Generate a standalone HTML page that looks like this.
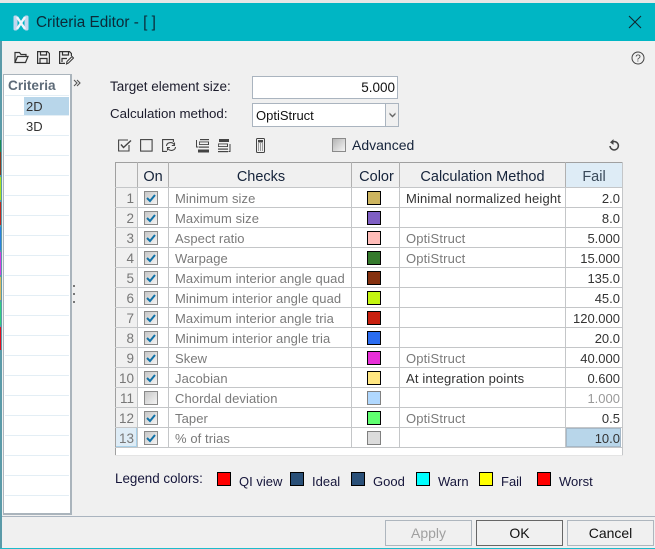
<!DOCTYPE html>
<html><head><meta charset="utf-8"><title>Criteria Editor</title>
<style>
html,body{margin:0;padding:0;background:#f0f0f0}
#w{position:relative;width:655px;height:549px;overflow:hidden;background:#f0f0f0;font:13px/20px "Liberation Sans",sans-serif;color:#1c1c2c}
#w div,#w span,#w svg{position:absolute;white-space:nowrap}
.b{background:#c4c6c8}
.n{left:115px;width:19px;text-align:right;color:#777;font-size:13.5px;margin-top:1px}
.t{left:175px;color:#7a7a7a;letter-spacing:.08px;margin-top:1px}
.m{left:406px;color:#7a7a7a;letter-spacing:.16px;margin-top:1px}
.f{left:566px;width:54px;text-align:right;color:#333;margin-top:1px}
.c{left:144px;width:12px;height:12px;border:1px solid #8a8a8a;background:linear-gradient(135deg,#c8c8c8,#f4f4f4)}
.s{left:367px;width:12px;height:12px;border:1px solid #000}
.h{top:167px;font-size:14.5px;color:#15233a;text-align:center}
.l{width:12px;height:12px;border:1px solid #000;top:472px}
.lt{top:472px;font-size:13px;color:#15153a}
.btn{top:520px;width:85px;height:24px;border:1px solid #aeb6be;text-align:center;line-height:24px;font-size:14px;background:#f0f0f0}
.ln{left:5px;width:64px;height:1px;background:#e3eef5}
</style></head><body><div id="w">
<div style="left:0;top:0;width:655px;height:3px;background:#e6e6e6"></div>
<div style="left:0;top:3px;width:655px;height:38px;background:#00b6c4"></div>
<div style="left:0;top:41px;width:2px;height:507px;background:#5a9aa8"></div>
<div style="left:0;top:140px;width:1px;height:12px;background:#1a8a50"></div>
<div style="left:0;top:152px;width:1px;height:23px;background:#8a3a20"></div>
<div style="left:0;top:177px;width:1px;height:23px;background:#a8e020"></div>
<div style="left:0;top:202px;width:1px;height:23px;background:#c02a20"></div>
<div style="left:0;top:227px;width:1px;height:23px;background:#2a80e0"></div>
<div style="left:0;top:252px;width:1px;height:23px;background:#d040e0"></div>
<div style="left:0;top:277px;width:1px;height:23px;background:#d8b860"></div>
<div style="left:0;top:302px;width:1px;height:23px;background:#30d080"></div>
<div style="left:0;top:327px;width:1px;height:23px;background:#e01020"></div>
<div style="left:2px;top:41px;width:653px;height:507px;background:#f0f0f0"></div>
<div style="left:0;top:548px;width:655px;height:1px;background:#1cbccb"></div>

<svg style="left:12px;top:14px" width="18" height="18" viewBox="0 0 18 18"><rect x="1.5" y="1.5" width="4" height="15" rx="1.5" fill="#c4d6ee"/><rect x="12.5" y="1.5" width="4" height="15" rx="1.5" fill="#c4d6ee"/><path d="M5 3 L9 9 L13 3 M5 15 L9 9 L13 15" fill="none" stroke="#f0f5fc" stroke-width="2.4"/></svg>
<div style="left:36px;top:13px;font-size:15.3px;color:#0c2a38">Criteria Editor - [ ]</div>
<svg style="left:628px;top:15px" width="14" height="14" viewBox="0 0 14 14"><path d="M1 1 L13 13 M13 1 L1 13" stroke="#10282f" stroke-width="1.1" fill="none"/></svg>

<svg style="left:14px;top:51px" width="15" height="13" viewBox="0 0 15 13" fill="none" stroke="#333" stroke-width="1.2"><path d="M1 11.5 V1.5 H5.5 L7 3.5 H12 V5.5"/><path d="M1 11.5 H11.5 L14 5.5 H3.5 L1 11.5 Z"/></svg>
<svg style="left:37px;top:51px" width="13" height="13" viewBox="0 0 13 13" fill="none" stroke="#333" stroke-width="1.2"><path d="M.6 .6 H10.5 L12.4 2.5 V12.4 H.6 Z"/><path d="M3.5 .6 V4 H9.5 V.6"/><path d="M3 12.4 V7.5 H10 V12.4"/></svg>
<svg style="left:59px;top:51px" width="15" height="14" viewBox="0 0 15 14" fill="none" stroke="#333" stroke-width="1.2"><path d="M6 12.4 H.6 V.6 H10.5 L12.4 2.5 V5"/><path d="M3.5 .6 V4 H9.5 V.6"/><path d="M3 11 V7.5 H8"/><path d="M7.5 13 L8 10.5 L13 5.5 L14.5 7 L9.5 12 Z" stroke-width="1"/></svg>
<svg style="left:631px;top:51px" width="14" height="14" viewBox="0 0 14 14"><circle cx="7" cy="7" r="6" fill="none" stroke="#444" stroke-width="1"/><text x="7" y="10.5" font-size="10" text-anchor="middle" fill="#444" font-family="Liberation Sans">?</text></svg>

<!-- left panel -->
<div style="left:3px;top:74px;width:66px;height:438px;border:1px solid #aab4bc;border-width:1px 2px 2px 1px;background:#fff"></div>
<div style="left:8px;top:76px;font-weight:bold;color:#5e6b78;font-size:13.6px">Criteria</div>
<div style="left:24px;top:97px;width:45px;height:18px;background:#b8d6ea"></div>
<div style="left:26px;top:97px;color:#333">2D</div>
<div style="left:26px;top:117px;color:#333">3D</div>
<div class="ln" style="top:95px"></div><div class="ln" style="top:115px"></div><div class="ln" style="top:135px"></div><div class="ln" style="top:155px"></div><div class="ln" style="top:175px"></div><div class="ln" style="top:195px"></div><div class="ln" style="top:215px"></div><div class="ln" style="top:235px"></div><div class="ln" style="top:255px"></div><div class="ln" style="top:275px"></div><div class="ln" style="top:295px"></div><div class="ln" style="top:315px"></div><div class="ln" style="top:335px"></div><div class="ln" style="top:355px"></div><div class="ln" style="top:375px"></div><div class="ln" style="top:395px"></div><div class="ln" style="top:415px"></div><div class="ln" style="top:435px"></div><div class="ln" style="top:455px"></div><div class="ln" style="top:475px"></div><div class="ln" style="top:495px"></div>
<svg style="left:73px;top:79px" width="8" height="8" viewBox="0 0 8 8" fill="none" stroke="#555" stroke-width="1.1"><path d="M1 1 L4 4 L1 7 M4 1 L7 4 L4 7"/></svg>
<div style="left:73px;top:285px;width:2px;height:2px;background:#777"></div>
<div style="left:73px;top:293px;width:2px;height:2px;background:#777"></div>
<div style="left:73px;top:301px;width:2px;height:2px;background:#777"></div>

<!-- form -->
<div style="left:110px;top:77px;font-size:13.5px">Target element size:</div>
<div style="left:110px;top:104px;font-size:13.3px">Calculation method:</div>
<div style="left:252px;top:76px;width:144px;height:21px;border:1px solid #aab4bf;background:#fff;text-align:right;line-height:21px;font-size:13.5px;color:#111"><span style="right:2px;top:0">5.000</span></div>
<div style="left:252px;top:103px;width:145px;height:22px;border:1px solid #aab4bf;background:#fff"></div>
<div style="left:256px;top:106px;font-size:13px;color:#111">OptiStruct</div>
<div style="left:385px;top:104px;width:1px;height:22px;background:#aab4bf"></div>
<div style="left:386px;top:104px;width:12px;height:22px;background:#f0f0f0"></div>
<svg style="left:389px;top:112px" width="7" height="6" viewBox="0 0 7 6"><path d="M.5 .5 L3.5 3.5 L6.5 .5 V2.5 L3.5 5.5 L.5 2.5 Z" fill="#666"/></svg>

<!-- table toolbar -->
<svg style="left:118px;top:139px" width="14" height="13" viewBox="0 0 14 13" fill="none" stroke="#444" stroke-width="1.1"><path d="M11 6 V12 H.6 V1 H10"/><path d="M3 5.5 L5.5 8.5 L13 1.5" stroke-width="1.4"/></svg>
<svg style="left:140px;top:139px" width="13" height="13" viewBox="0 0 13 13" fill="none" stroke="#444" stroke-width="1.1"><rect x=".6" y=".6" width="11.5" height="11.5"/></svg>
<svg style="left:162px;top:139px" width="15" height="14" viewBox="0 0 15 14" fill="none" stroke="#444" stroke-width="1.1"><path d="M5 12.4 H.6 V.6 H11.4 V3"/><path d="M4.5 7 A4 3.6 0 0 1 12 5.5 M13.5 8 A4 3.6 0 0 1 6 9.5"/><path d="M12.5 3.5 V6.5 H9.8 M5.5 11.5 V8.5 H8"/></svg>
<svg style="left:195px;top:139px" width="15" height="14" viewBox="0 0 15 14" fill="#444"><rect x="5" y="0" width="9" height="1.2"/><path d="M4 2.5 H14 V6 H4 Z M4.8 3.4 V5.1 H13 V3.4 Z" fill-rule="evenodd"/><path d="M4 7.5 H14 V8.7 H4 Z"/><rect x="3" y="10.5" width="11" height="3"/><path d="M1.5 1 V8 H3.5" fill="none" stroke="#444"/></svg>
<svg style="left:217px;top:139px" width="15" height="14" viewBox="0 0 15 14" fill="#444"><rect x="2" y="0" width="10" height="3"/><path d="M1 4.5 H11 V8 H1 Z M1.8 5.4 V7.1 H10 V5.4 Z" fill-rule="evenodd"/><rect x="1" y="9.5" width="10" height="1.2"/><rect x="1" y="12" width="10" height="1.2"/><path d="M13 5 V12.5 H11.5" fill="none" stroke="#444"/></svg>
<svg style="left:256px;top:138px" width="9" height="15" viewBox="0 0 9 15"><rect x=".5" y=".5" width="8" height="14" rx="1" fill="none" stroke="#444"/><rect x="2" y="2" width="5" height="2.5" fill="#444"/><path d="M2 6 H3 M4 6 H5 M6 6 H7 M2 8 H3 M4 8 H5 M6 8 H7 M2 10 H3 M4 10 H5 M6 10 H7 M2 12 H3 M4 12 H5 M6 12 H7" stroke="#444"/></svg>
<div style="left:332px;top:138px;width:12px;height:12px;border:1px solid #8a8a8a;background:linear-gradient(135deg,#b4b4b4,#f4f4f4)"></div>
<div style="left:352px;top:135px;font-size:14px;color:#15233a">Advanced</div>
<svg style="left:608px;top:139px" width="12" height="13" viewBox="0 0 12 13" fill="none" stroke="#444" stroke-width="1.5"><path d="M3.5 3.5 A4.2 4.2 0 1 1 2 7"/><path d="M5.5 .5 L2.5 3.3 L5.5 5.5" fill="#444" stroke-width=".6"/></svg>

<!-- table -->
<div style="left:115px;top:162px;width:507px;height:293px;background:#fff;box-shadow:inset 0 0 0 0 #000"></div>
<div style="left:115px;top:162px;width:507px;height:25px;background:#f0f0f0"></div>
<div style="left:566px;top:162px;width:56px;height:25px;background:#deecf6"></div>
<div style="left:115px;top:187px;width:22px;height:260px;background:#f0f0f0"></div>
<div style="left:115px;top:427px;width:22px;height:20px;background:#deecf6;box-shadow:inset 0 0 0 1px #a8d0e8"></div>
<div style="left:566px;top:428px;width:55px;height:19px;background:#b8d6ea;box-shadow:inset 0 0 0 1px #a4b8c8"></div>
<div style="left:115px;top:162px;width:507px;height:1px;background:#a0a0a0"></div>
<div style="left:115px;top:162px;width:1px;height:293px;background:#a0a0a0"></div>
<div class="b" style="left:622px;top:162px;width:1px;height:293px"></div>
<div style="left:137px;top:162px;width:1px;height:25px;background:#b0b0b0"></div>
<div style="left:168px;top:162px;width:1px;height:25px;background:#b0b0b0"></div>
<div style="left:351px;top:162px;width:1px;height:25px;background:#b0b0b0"></div>
<div style="left:399px;top:162px;width:1px;height:25px;background:#b0b0b0"></div>
<div style="left:565px;top:162px;width:1px;height:25px;background:#b0b0b0"></div>
<div class="b" style="left:137px;top:187px;width:1px;height:260px"></div>
<div class="b" style="left:168px;top:187px;width:1px;height:260px"></div>
<div class="b" style="left:351px;top:187px;width:1px;height:260px"></div>
<div class="b" style="left:399px;top:187px;width:1px;height:260px"></div>
<div class="b" style="left:565px;top:187px;width:1px;height:260px"></div>
<div class="b" style="left:115px;top:187px;width:507px;height:1px"></div><div class="b" style="left:115px;top:207px;width:507px;height:1px"></div><div class="b" style="left:115px;top:227px;width:507px;height:1px"></div><div class="b" style="left:115px;top:247px;width:507px;height:1px"></div><div class="b" style="left:115px;top:267px;width:507px;height:1px"></div><div class="b" style="left:115px;top:287px;width:507px;height:1px"></div><div class="b" style="left:115px;top:307px;width:507px;height:1px"></div><div class="b" style="left:115px;top:327px;width:507px;height:1px"></div><div class="b" style="left:115px;top:347px;width:507px;height:1px"></div><div class="b" style="left:115px;top:367px;width:507px;height:1px"></div><div class="b" style="left:115px;top:387px;width:507px;height:1px"></div><div class="b" style="left:115px;top:407px;width:507px;height:1px"></div><div class="b" style="left:115px;top:427px;width:507px;height:1px"></div><div class="b" style="left:115px;top:447px;width:507px;height:1px"></div>
<div style="left:115px;top:455px;width:508px;height:1px;background:#e4e4e4"></div>

<div class="h" style="left:138px;width:30px">On</div>
<div class="h" style="left:170px;width:182px">Checks</div>
<div class="h" style="left:353px;width:47px">Color</div>
<div class="h" style="left:400px;width:165px">Calculation Method</div>
<div class="h" style="left:566px;width:56px;color:#3a4a5a">Fail</div>

<div class="n" style="top:188px">1</div><div class="c" style="top:191px"></div><div class="t" style="top:188px">Minimum size</div><div class="s" style="top:191px;background:#cdb55f"></div><div class="m" style="top:188px;color:#333">Minimal normalized height</div><div class="f" style="top:188px">2.0</div>
<div class="n" style="top:208px">2</div><div class="c" style="top:211px"></div><div class="t" style="top:208px">Maximum size</div><div class="s" style="top:211px;background:#7f5fc4"></div><div class="f" style="top:208px">8.0</div>
<div class="n" style="top:228px">3</div><div class="c" style="top:231px"></div><div class="t" style="top:228px">Aspect ratio</div><div class="s" style="top:231px;background:#ffbcb8"></div><div class="m" style="top:228px">OptiStruct</div><div class="f" style="top:228px">5.000</div>
<div class="n" style="top:248px">4</div><div class="c" style="top:251px"></div><div class="t" style="top:248px">Warpage</div><div class="s" style="top:251px;background:#357a2c"></div><div class="m" style="top:248px">OptiStruct</div><div class="f" style="top:248px">15.000</div>
<div class="n" style="top:268px">5</div><div class="c" style="top:271px"></div><div class="t" style="top:268px">Maximum interior angle quad</div><div class="s" style="top:271px;background:#85310f"></div><div class="f" style="top:268px">135.0</div>
<div class="n" style="top:288px">6</div><div class="c" style="top:291px"></div><div class="t" style="top:288px">Minimum interior angle quad</div><div class="s" style="top:291px;background:#c4f510"></div><div class="f" style="top:288px">45.0</div>
<div class="n" style="top:308px">7</div><div class="c" style="top:311px"></div><div class="t" style="top:308px">Maximum interior angle tria</div><div class="s" style="top:311px;background:#c8200f"></div><div class="f" style="top:308px">120.000</div>
<div class="n" style="top:328px">8</div><div class="c" style="top:331px"></div><div class="t" style="top:328px">Minimum interior angle tria</div><div class="s" style="top:331px;background:#2a6cf0"></div><div class="f" style="top:328px">20.0</div>
<div class="n" style="top:348px">9</div><div class="c" style="top:351px"></div><div class="t" style="top:348px">Skew</div><div class="s" style="top:351px;background:#e82fd8"></div><div class="m" style="top:348px">OptiStruct</div><div class="f" style="top:348px">40.000</div>
<div class="n" style="top:368px">10</div><div class="c" style="top:371px"></div><div class="t" style="top:368px">Jacobian</div><div class="s" style="top:371px;background:#ffe680"></div><div class="m" style="top:368px;color:#333">At integration points</div><div class="f" style="top:368px">0.600</div>
<div class="n" style="top:388px">11</div><div class="c" style="top:391px"></div><div class="t" style="top:388px">Chordal deviation</div><div class="s" style="top:391px;background:#b0d8ff;border-color:#808080"></div><div class="f" style="top:388px;color:#999">1.000</div>
<div class="n" style="top:408px">12</div><div class="c" style="top:411px"></div><div class="t" style="top:408px">Taper</div><div class="s" style="top:411px;background:#60ff70"></div><div class="m" style="top:408px">OptiStruct</div><div class="f" style="top:408px">0.5</div>
<div class="n" style="top:428px">13</div><div class="c" style="top:431px"></div><div class="t" style="top:428px">% of trias</div><div class="s" style="top:431px;background:#dcdcdc;border-color:#808080"></div><div class="f" style="top:428px">10.0</div>

<svg style="left:144px;top:191px" width="14" height="254" viewBox="0 0 14 254" fill="none" stroke="#1272a8" stroke-width="2"><path d="M3 7 L6 10 L11 4"/><path d="M3 27 L6 30 L11 24"/><path d="M3 47 L6 50 L11 44"/><path d="M3 67 L6 70 L11 64"/><path d="M3 87 L6 90 L11 84"/><path d="M3 107 L6 110 L11 104"/><path d="M3 127 L6 130 L11 124"/><path d="M3 147 L6 150 L11 144"/><path d="M3 167 L6 170 L11 164"/><path d="M3 187 L6 190 L11 184"/><path d="M3 227 L6 230 L11 224"/><path d="M3 247 L6 250 L11 244"/></svg>

<!-- legend -->
<div class="lt" style="left:115px;top:469px;font-size:13.4px">Legend colors:</div>
<div class="l" style="left:217px;background:#ff0000"></div><div class="lt" style="left:239px">QI view</div>
<div class="l" style="left:290px;background:#2a5078"></div><div class="lt" style="left:312px">Ideal</div>
<div class="l" style="left:351px;background:#2a5078"></div><div class="lt" style="left:373px">Good</div>
<div class="l" style="left:416px;background:#00ffff"></div><div class="lt" style="left:438px">Warn</div>
<div class="l" style="left:479px;background:#ffff00"></div><div class="lt" style="left:501px">Fail</div>
<div class="l" style="left:537px;background:#ff0000"></div><div class="lt" style="left:559px">Worst</div>

<!-- footer -->
<div style="left:2px;top:516px;width:653px;height:1px;background:#aab4bf"></div>
<div class="btn" style="left:385px;color:#a0a0a0">Apply</div>
<div class="btn" style="left:476px;border-color:#666;color:#111">OK</div>
<div class="btn" style="left:567px;color:#111">Cancel</div>
</div></body></html>
